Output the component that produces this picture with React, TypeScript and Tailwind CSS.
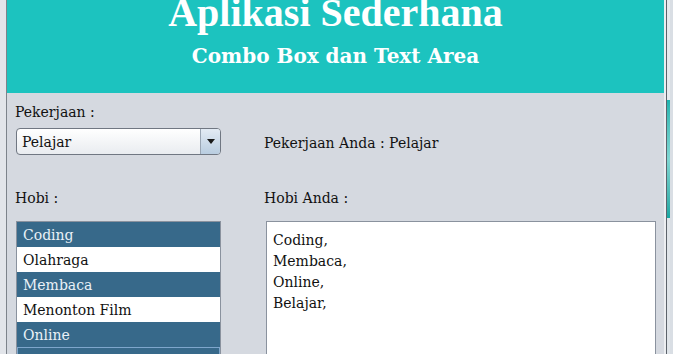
const SERIF = { fontFamily: '"DejaVu Serif", "Liberation Serif", serif' }
const TITLE = { fontFamily: '"Liberation Serif", "DejaVu Serif", serif' }

const HOBI = [
  { label: 'Coding', selected: true },
  { label: 'Olahraga', selected: false },
  { label: 'Membaca', selected: true },
  { label: 'Menonton Film', selected: false },
  { label: 'Online', selected: true },
  { label: 'Belajar', selected: true, focus: true },
]

function ComboBox({ value }: { value: string }) {
  return (
    <div className="flex h-[27px] w-[205px] overflow-hidden rounded-[4px] border border-[#707782] bg-gradient-to-b from-white to-[#e9ecf0]">
      <div className="flex flex-1 items-center pl-[5px] text-[14px] leading-none text-[#111]">{value}</div>
      <div className="flex w-[20px] items-center justify-center border-l border-[#9aa6b4] bg-gradient-to-b from-[#e3ebf4] to-[#b9cde0]">
        <svg width="8" height="5" viewBox="0 0 8 5">
          <path d="M0 0 H8 L4 5 Z" fill="#1a1a1a" />
        </svg>
      </div>
    </div>
  )
}

export default function App() {
  return (
    <div className="flex h-[354px] w-[673px] overflow-hidden bg-[#dfe3e8]" style={SERIF}>
      {/* frame kiri */}
      <div className="h-full w-[7px] shrink-0 border-r border-[#7d838b] bg-[#e2e5ea]" />

      <div className="flex h-full w-[657px] shrink-0 flex-col overflow-hidden">
        {/* header */}
        <div className="flex h-[93px] shrink-0 flex-col items-center overflow-hidden bg-[#1cc3bf] text-white">
          <div className="mt-[-7px] text-[40px] font-bold leading-none" style={TITLE}>
            Aplikasi Sederhana
          </div>
          <div className="mt-[13px] text-[20px] font-bold leading-none">Combo Box dan Text Area</div>
        </div>

        {/* isi */}
        <div className="flex min-h-0 flex-1 overflow-hidden bg-[#d5d9e0] pl-[8px] pt-[9px] text-[14px] text-[#111]">
          <div className="flex w-[214px] shrink-0 flex-col">
            <div className="h-[20px] leading-[20px]">Pekerjaan :</div>
            <div className="ml-[1px] mt-[6px]">
              <ComboBox value="Pelajar" />
            </div>
            <div className="mt-[33px] h-[20px] leading-[20px]">Hobi :</div>
            <div className="ml-[1px] mt-[13px] w-[205px] shrink-0 border border-[#8a929e] bg-white">
              {HOBI.map((h) => (
                <div
                  key={h.label}
                  className={
                    h.selected
                      ? h.focus
                        ? 'h-[25px] border border-[#7ea6cc] bg-[#37698a] pl-[5px] pt-[1px] leading-[23px] text-[#eaf1f7]'
                        : 'h-[25px] bg-[#37698a] pl-[6px] pt-[2px] leading-[23px] text-[#eaf1f7]'
                      : 'h-[25px] bg-white pl-[6px] pt-[2px] leading-[23px] text-[#111]'
                  }
                >
                  {h.label}
                </div>
              ))}
            </div>
          </div>

          <div className="ml-[35px] flex flex-col">
            <div className="mt-[31px] h-[20px] leading-[20px]">Pekerjaan Anda : Pelajar</div>
            <div className="mt-[35px] h-[20px] leading-[20px]">Hobi Anda :</div>
            <div className="ml-[2px] mt-[13px] h-[200px] w-[390px] shrink-0 border border-[#8a929e] bg-white pl-[6px] pt-[8px] leading-[21px]">
              <div>Coding,</div>
              <div>Membaca,</div>
              <div>Online,</div>
              <div>Belajar,</div>
            </div>
          </div>
        </div>
      </div>

      {/* frame kanan */}
      <div className="flex h-full w-[9px] shrink-0">
        <div className="w-[2px] bg-[#eceef1]" />
        <div className="w-[1px] bg-[#5c636b]" />
        <div className="flex w-[3px] flex-col bg-[#dfe4e9]">
          <div className="h-[100px] bg-[#e6eaee]" />
          <div className="h-[118px] bg-gradient-to-b from-[#1cb5b0] via-[#7fd6d2] to-[#14a7a2]" />
        </div>
        <div className="w-[3px] bg-[#d9dee4]" />
      </div>
    </div>
  )
}
